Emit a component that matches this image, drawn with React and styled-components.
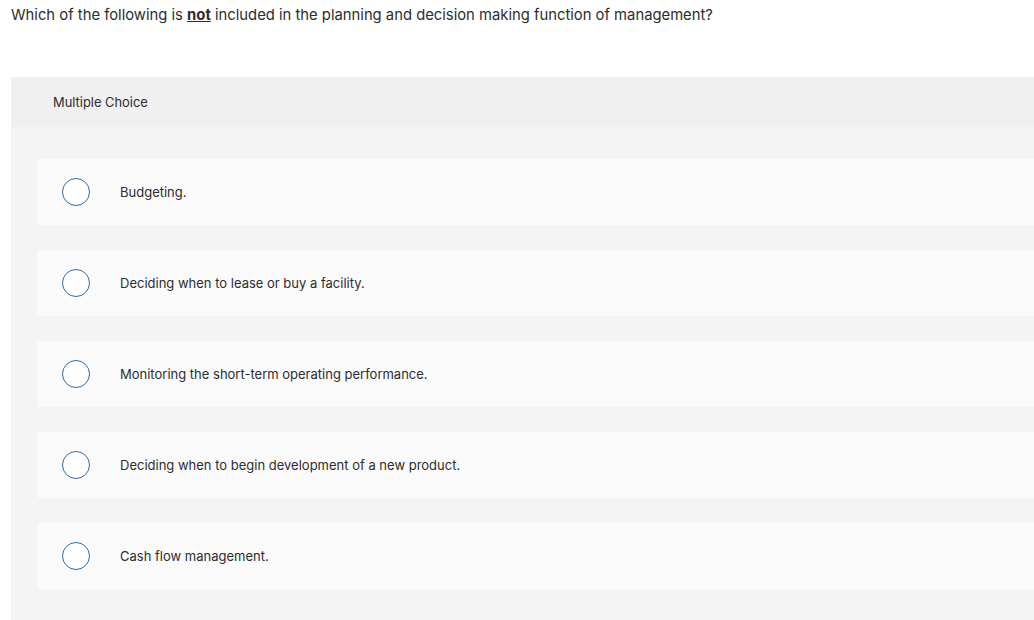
import React from 'react';
import styled, { createGlobalStyle } from 'styled-components';

const GlobalStyle = createGlobalStyle`
  html, body {
    margin: 0;
    padding: 0;
    background: #fff;
    overflow: hidden;
  }
  body {
    font-family: Inter, Lato, "Liberation Sans", sans-serif;
    color: #333;
  }
`;

const Page = styled.div`
  padding: 6px 0 0 11px;
`;

const Question = styled.p`
  margin: 0;
  font-size: 14.8px;
  line-height: 18px;
  color: #2d2d2d;

  strong {
    font-weight: 700;
    text-decoration: underline;
  }
`;

const Panel = styled.section`
  margin-top: 53px;
  margin-right: -40px;
  background: #f4f4f4;
  padding-bottom: 40px;
`;

const PanelHeader = styled.div`
  height: 50px;
  background: #f0f0f0;
  display: flex;
  align-items: center;
  padding-left: 42px;
  font-size: 12.9px;
  color: #2d2d2d;
`;

const OptionList = styled.div`
  display: flex;
  flex-direction: column;
  gap: 25px;
  padding: 32px 0 0 26px;
`;

const OptionCard = styled.label`
  height: 66px;
  background: #fafafa;
  border-radius: 3px;
  display: flex;
  align-items: center;
  padding-left: 25px;
  cursor: pointer;
`;

const Radio = styled.span`
  width: 26px;
  height: 26px;
  border: 1.3px solid #2f6aa3;
  border-radius: 50%;
  background: #fff;
  flex-shrink: 0;
`;

const OptionText = styled.span`
  margin-left: 30px;
  font-size: 13px;
  color: #2d2d2d;
`;

const options = [
  'Budgeting.',
  'Deciding when to lease or buy a facility.',
  'Monitoring the short-term operating performance.',
  'Deciding when to begin development of a new product.',
  'Cash flow management.',
];

export default function App() {
  return (
    <>
      <GlobalStyle />
      <Page>
        <Question>
          Which of the following is <strong>not</strong> included in the planning and decision making function of management?
        </Question>
        <Panel>
          <PanelHeader>Multiple Choice</PanelHeader>
          <OptionList>
            {options.map((text) => (
              <OptionCard key={text}>
                <Radio />
                <OptionText>{text}</OptionText>
              </OptionCard>
            ))}
          </OptionList>
        </Panel>
      </Page>
    </>
  );
}
